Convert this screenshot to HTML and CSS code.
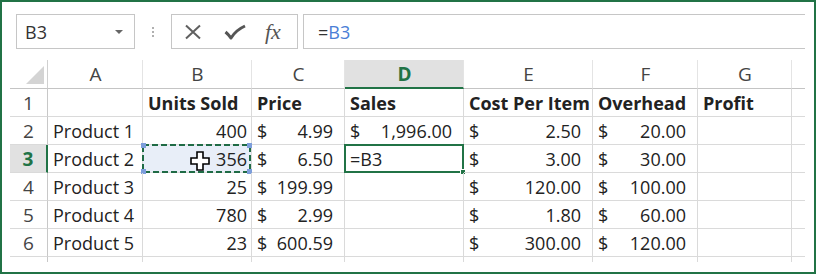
FILE: index.html
```html
<!DOCTYPE html>
<html lang="en">
<head>
    <meta charset="UTF-8">
    <meta name="viewport" content="width=device-width, initial-scale=1.0">
    <title>Sales sheet</title>
    <link rel="stylesheet" href="styles.css">
</head>
<body>
    <div class="frame">
        <div class="toolbar">
            <div class="name-box">
                <span>B3</span>
                <svg class="arrow" width="8" height="4" viewBox="0 0 8 4"><polygon points="0,0 8,0 4,4" fill="#666"/></svg>
            </div>
            <div class="grip"><i></i><i></i><i></i></div>
            <div class="fx-buttons">
                <svg width="18" height="16" viewBox="0 0 18 16"><path d="M2 1.5 L16 14.5 M16 1.5 L2 14.5" stroke="#606060" stroke-width="2" fill="none"/></svg>
                <svg width="22" height="16" viewBox="0 0 22 16"><path d="M1.5 8 Q4 10 7 14 Q12 6 21 2" stroke="#555" stroke-width="3" fill="none" stroke-linejoin="round"/></svg>
                <span class="fx">fx</span>
            </div>
            <div class="formula">=<span class="ref">B3</span></div>
        </div>

        <div class="sheet">
            <div class="cell hdr corner">
                <svg width="18" height="18" viewBox="0 0 18 18"><polygon points="18,0 18,18 0,18" fill="#d4d4d4"/></svg>
            </div>
            <div class="cell hdr">A</div>
            <div class="cell hdr">B</div>
            <div class="cell hdr">C</div>
            <div class="cell hdr active-col">D</div>
            <div class="cell hdr">E</div>
            <div class="cell hdr">F</div>
            <div class="cell hdr">G</div>
            <div class="cell hdr"></div>

            <div class="cell num">1</div>
            <div class="cell"></div>
            <div class="cell bold">Units Sold</div>
            <div class="cell bold">Price</div>
            <div class="cell bold">Sales</div>
            <div class="cell bold">Cost Per Item</div>
            <div class="cell bold">Overhead</div>
            <div class="cell bold">Profit</div>
            <div class="cell"></div>

            <div class="cell num">2</div>
            <div class="cell">Product 1</div>
            <div class="cell right">400</div>
            <div class="cell money"><span>$</span><span>4.99</span></div>
            <div class="cell money"><span>$</span><span>1,996.00</span></div>
            <div class="cell money"><span>$</span><span>2.50</span></div>
            <div class="cell money"><span>$</span><span>20.00</span></div>
            <div class="cell"></div>
            <div class="cell"></div>

            <div class="cell num active-row">3</div>
            <div class="cell">Product 2</div>
            <div class="cell right copied">
                356
                <svg class="marquee" width="111" height="31" viewBox="0 0 111 31">
                    <rect x="2" y="2" width="107" height="27" fill="none" stroke="#1f6b45" stroke-width="2" stroke-dasharray="6 3"/>
                    <rect x="0" y="0" width="5" height="5" fill="#7d9edb"/>
                    <rect x="106" y="0" width="5" height="5" fill="#7d9edb"/>
                    <rect x="0" y="26" width="5" height="5" fill="#7d9edb"/>
                    <rect x="106" y="26" width="5" height="5" fill="#7d9edb"/>
                </svg>
                <svg class="pointer" width="20" height="20" viewBox="0 0 20 20">
                    <path d="M7 1 H13 V7 H19 V13 H13 V19 H7 V13 H1 V7 H7 Z" fill="#fff" stroke="#000" stroke-width="1.6"/>
                </svg>
            </div>
            <div class="cell money"><span>$</span><span>6.50</span></div>
            <div class="cell editing">=B3<i class="handle"></i></div>
            <div class="cell money"><span>$</span><span>3.00</span></div>
            <div class="cell money"><span>$</span><span>30.00</span></div>
            <div class="cell"></div>
            <div class="cell"></div>

            <div class="cell num">4</div>
            <div class="cell">Product 3</div>
            <div class="cell right">25</div>
            <div class="cell money"><span>$</span><span>199.99</span></div>
            <div class="cell"></div>
            <div class="cell money"><span>$</span><span>120.00</span></div>
            <div class="cell money"><span>$</span><span>100.00</span></div>
            <div class="cell"></div>
            <div class="cell"></div>

            <div class="cell num">5</div>
            <div class="cell">Product 4</div>
            <div class="cell right">780</div>
            <div class="cell money"><span>$</span><span>2.99</span></div>
            <div class="cell"></div>
            <div class="cell money"><span>$</span><span>1.80</span></div>
            <div class="cell money"><span>$</span><span>60.00</span></div>
            <div class="cell"></div>
            <div class="cell"></div>

            <div class="cell num">6</div>
            <div class="cell">Product 5</div>
            <div class="cell right">23</div>
            <div class="cell money"><span>$</span><span>600.59</span></div>
            <div class="cell"></div>
            <div class="cell money"><span>$</span><span>300.00</span></div>
            <div class="cell money"><span>$</span><span>120.00</span></div>
            <div class="cell"></div>
            <div class="cell"></div>

            <div class="cell stub num"></div>
            <div class="cell stub"></div>
            <div class="cell stub"></div>
            <div class="cell stub"></div>
            <div class="cell stub"></div>
            <div class="cell stub"></div>
            <div class="cell stub"></div>
            <div class="cell stub"></div>
            <div class="cell stub"></div>
        </div>
    </div>
</body>
</html>
```

FILE: styles.css
```css
* {
    box-sizing: border-box;
}
body {
    margin: 0;
    font-family: "Open Sans", "Noto Sans", sans-serif;
    color: #222;
}
.frame {
    width: 816px;
    height: 274px;
    border: 2px solid #217346;
    background: white;
    overflow: hidden;
}
.toolbar {
    display: flex;
    align-items: center;
    height: 35px;
    margin-top: 12px;
    margin-left: 14px;
}
.name-box {
    width: 119px;
    height: 35px;
    border: 1px solid #c6c6c6;
    display: flex;
    align-items: center;
    justify-content: space-between;
    padding: 0 11px 0 8px;
    font-size: 18px;
    color: #333;
}
.grip {
    width: 36px;
    display: flex;
    flex-direction: column;
    align-items: center;
    gap: 2px;
}
.grip i {
    width: 2px;
    height: 2px;
    background: #b0b0b0;
}
.fx-buttons {
    width: 127px;
    height: 35px;
    border: 1px solid #c6c6c6;
    display: flex;
    align-items: center;
    gap: 22px;
    padding-left: 12px;
}
.fx {
    font-family: "Liberation Serif", serif;
    font-style: italic;
    font-size: 22px;
    color: #555;
    margin-left: -3px;
}
.formula {
    width: 502px;
    height: 35px;
    margin-left: 5px;
    border: 1px solid #c6c6c6;
    border-right: none;
    display: flex;
    align-items: center;
    padding-left: 14px;
    font-size: 18px;
    color: #333;
}
.formula .ref {
    color: #4a7ed6;
}
.sheet {
    display: grid;
    grid-template-columns: 38px 95px 109px 93px 119px 129px 105px 94px 13px;
    grid-template-rows: 29px repeat(6, 28px) 5px;
    margin-top: 11px;
    margin-left: 8px;
}
.cell {
    position: relative;
    display: flex;
    align-items: center;
    padding: 0 4px 0 5px;
    font-size: 18px;
    white-space: nowrap;
    border-right: 1px solid #dadada;
    border-bottom: 1px solid #dadada;
}
.cell:nth-child(9n) {
    border-right: none;
}
.hdr {
    justify-content: center;
    color: #444;
    font-size: 19px;
    border-right-color: #e4e4e4;
    border-bottom-color: #c4c4c4;
}
.corner {
    justify-content: flex-end;
    align-items: flex-end;
    padding: 0 3px 4px 0;
    border-right-color: #d0d0d0;
}
.active-col {
    background: #e1e1e1;
    color: #217346;
    font-weight: bold;
    border-bottom: 2px solid #217346;
}
.num {
    justify-content: center;
    color: #444;
    font-size: 19px;
    padding: 0;
    border-right-color: #c8c8c8;
}
.active-row {
    background: #e1e1e1;
    color: #217346;
    font-weight: bold;
    border-right: 2px solid #217346;
}
.bold {
    font-weight: bold;
}
.right {
    justify-content: flex-end;
}
.money {
    justify-content: space-between;
    padding-right: 11px;
}
.copied {
    background: #e8eef8;
}
.marquee {
    position: absolute;
    left: -2px;
    top: -2px;
}
.pointer {
    position: absolute;
    left: 47px;
    top: 6px;
}
.editing {
    border: 2px solid #217346;
    margin: -1px 0 0 -1px;
    padding-left: 4px;
}
.handle {
    position: absolute;
    right: -4px;
    bottom: -4px;
    width: 6px;
    height: 6px;
    background: #217346;
    border: 1px solid white;
}
.stub {
    border-bottom: none;
}
```
